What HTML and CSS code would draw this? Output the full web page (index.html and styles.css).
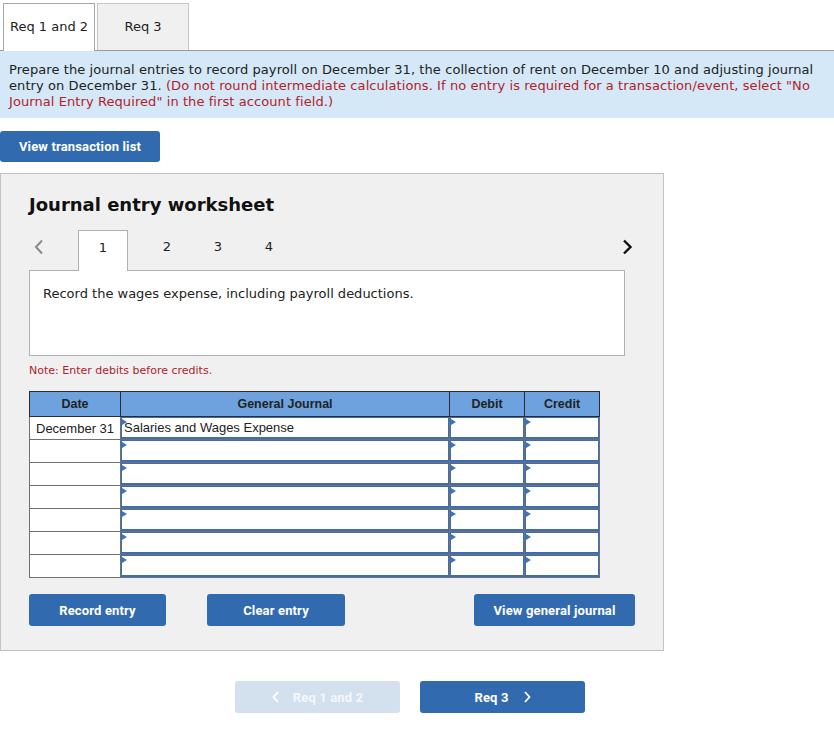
FILE: index.html
```html
<!DOCTYPE html>
<html lang="en">
<head>
  <meta charset="UTF-8" />
  <title>Journal Entry Worksheet</title>
  <link rel="stylesheet" href="styles.css">
</head>
<body>

<!-- Requirement tabs -->
<div class="req-tabs">
  <div class="req-tab active">Req 1 and 2</div>
  <div class="req-tab">Req 3</div>
</div>

<div class="instructions">
  Prepare the journal entries to record payroll on December 31, the collection of rent on December 10 and adjusting journal entry on December 31.
  <span class="red">(Do not round intermediate calculations. If no entry is required for a transaction/event, select "No Journal Entry Required" in the first account field.)</span>
</div>

<button class="btn btn-list">View transaction list</button>

<!-- Worksheet -->
<div class="worksheet">
  <h2>Journal entry worksheet</h2>

  <div class="steps">
    <span class="chev prev">
      <svg width="10" height="16" viewBox="0 0 10 16"><path d="M8 1.5 L2 8 L8 14.5" fill="none" stroke="#8a8a8a" stroke-width="2"/></svg>
    </span>
    <div class="step active">1</div>
    <div class="step">2</div>
    <div class="step">3</div>
    <div class="step">4</div>
    <span class="chev next">
      <svg width="11" height="16" viewBox="0 0 11 16"><path d="M2 1.5 L8.5 8 L2 14.5" fill="none" stroke="#111" stroke-width="2.4"/></svg>
    </span>
  </div>

  <div class="desc">Record the wages expense, including payroll deductions.</div>

  <p class="note">Note: Enter debits before credits.</p>

  <table class="journal">
    <thead>
      <tr>
        <th class="c-date">Date</th>
        <th class="c-acct">General Journal</th>
        <th class="c-amt">Debit</th>
        <th class="c-amt">Credit</th>
      </tr>
    </thead>
    <tbody>
      <tr>
        <td class="date">December 31</td>
        <td><div class="field">Salaries and Wages Expense</div></td>
        <td><div class="field"></div></td>
        <td><div class="field"></div></td>
      </tr>
      <tr><td class="date"></td><td><div class="field"></div></td><td><div class="field"></div></td><td><div class="field"></div></td></tr>
      <tr><td class="date"></td><td><div class="field"></div></td><td><div class="field"></div></td><td><div class="field"></div></td></tr>
      <tr><td class="date"></td><td><div class="field"></div></td><td><div class="field"></div></td><td><div class="field"></div></td></tr>
      <tr><td class="date"></td><td><div class="field"></div></td><td><div class="field"></div></td><td><div class="field"></div></td></tr>
      <tr><td class="date"></td><td><div class="field"></div></td><td><div class="field"></div></td><td><div class="field"></div></td></tr>
      <tr><td class="date"></td><td><div class="field"></div></td><td><div class="field"></div></td><td><div class="field"></div></td></tr>
    </tbody>
  </table>

  <div class="actions">
    <button class="btn btn-record">Record entry</button>
    <button class="btn btn-clear">Clear entry</button>
    <button class="btn btn-view">View general journal</button>
  </div>
</div>

<!-- Bottom navigation -->
<div class="req-nav">
  <button class="btn nav-btn disabled">
    <svg width="8" height="12" viewBox="0 0 8 12"><path d="M6 1 L1.5 6 L6 11" fill="none" stroke="#fff" stroke-width="1.8"/></svg>
    Req 1 and 2
  </button>
  <button class="btn nav-btn">
    Req 3
    <svg width="8" height="12" viewBox="0 0 8 12"><path d="M2 1 L6.5 6 L2 11" fill="none" stroke="#fff" stroke-width="1.8"/></svg>
  </button>
</div>

</body>
</html>
```

FILE: styles.css
```css
* {
  margin: 0; padding: 0; box-sizing: border-box;
}

body {
  font-family: "DejaVu Sans", Verdana, sans-serif;
  font-size: 13px;
  color: #222;
  background: #fff;
  width: 834px;
}

/* requirement tabs */
.req-tabs {
  display: flex;
  gap: 2px;
  padding: 3px 0 0 3px;
  border-bottom: 1px solid #9a9a9a;
}

.req-tab {
  width: 92px;
  height: 47px;
  line-height: 46px;
  text-align: center;
  border: 1px solid #c6c6c6;
  border-bottom: none;
  background: #f0f0f0;
}

.req-tab.active {
  background: #fff;
  border-color: #a8a8a8;
  margin-bottom: -1px;
  height: 48px;
}

.instructions {
  background: #d5e8f7;
  padding: 11px 9px 8px;
  line-height: 16px;
  letter-spacing: 0.08px;
}

.red { color: #b1232a; }

/* buttons */
.btn {
  font-family: Roboto, "Liberation Sans", sans-serif;
  font-weight: 700;
  font-size: 13px;
  letter-spacing: 0.15px;
  color: #fff;
  background: #326ab0;
  border: none;
  border-radius: 3px;
  height: 32px;
  cursor: pointer;
}

.btn-list {
  display: block;
  width: 160px;
  height: 31px;
  margin-top: 13px;
}

/* worksheet */
.worksheet {
  width: 664px;
  margin-top: 11px;
  background: #f0f0f0;
  border: 1px solid #c3c3c3;
  padding: 19px 38px 24px 28px;
}

.worksheet h2 {
  font-size: 18px;
  font-weight: bold;
  line-height: 24px;
  color: #111;
}

.steps {
  display: flex;
  align-items: center;
  height: 41px;
  margin-top: 13px;
  margin-bottom: -1px;
  position: relative;
  z-index: 1;
}

.chev {
  display: flex;
  align-items: center;
}

.chev.prev {
  width: 49px;
  padding-left: 5px;
  margin-top: -8px;
}

.chev.next {
  margin-left: auto;
  margin-right: -8px;
  margin-top: -8px;
}

.step {
  width: 50px;
  height: 41px;
  line-height: 34px;
  text-align: center;
  margin-right: 1px;
}

.step.active {
  background: #fff;
  border: 1px solid #b0b0b0;
  border-bottom: none;
  margin-right: 14px;
}

.desc {
  background: #fff;
  border: 1px solid #b0b0b0;
  height: 86px;
  padding: 15px 13px;
}

.note {
  color: #b1232a;
  font-size: 11px;
  margin-top: 8px;
}

/* journal table */
.journal {
  border-collapse: collapse;
  margin-top: 14px;
  font-family: "Liberation Sans", Arial, sans-serif;
  font-size: 13px;
  width: 571px;
}

.journal th {
  background: #6ea2df;
  border: 1px solid #2c2c2c;
  height: 25px;
  font-weight: bold;
  font-size: 12.5px;
  color: #222;
}

.journal .c-date { width: 91px; }
.journal .c-acct { width: 329px; }
.journal .c-amt { width: 75px; }

.journal td {
  border: 1px solid #707070;
  height: 23px;
  padding: 0;
  background: #fff;
}

.journal td.date {
  padding-left: 6px;
}

.field {
  position: relative;
  height: 22px;
  border: 1px solid #3e6db3;
  border-bottom-width: 2px;
  padding-left: 2px;
  line-height: 19px;
}

.field::before {
  content: "";
  position: absolute;
  left: 0;
  top: 1px;
  border-left: 5px solid #3a74c2;
  border-top: 3px solid transparent;
  border-bottom: 3px solid transparent;
}

.actions {
  display: flex;
  margin-top: 16px;
  margin-right: -10px;
}

.btn-record { width: 137px; }
.btn-clear { width: 138px; margin-left: 41px; }
.btn-view { width: 161px; margin-left: auto; }

/* bottom nav */
.req-nav {
  display: flex;
  gap: 20px;
  padding-left: 235px;
  margin-top: 30px;
}

.nav-btn {
  width: 165px;
  display: flex;
  align-items: center;
  justify-content: center;
  gap: 14px;
}

.nav-btn.disabled {
  background: #d3e0ee;
  color: #f4f7fb;
  gap: 13px;
}
```
